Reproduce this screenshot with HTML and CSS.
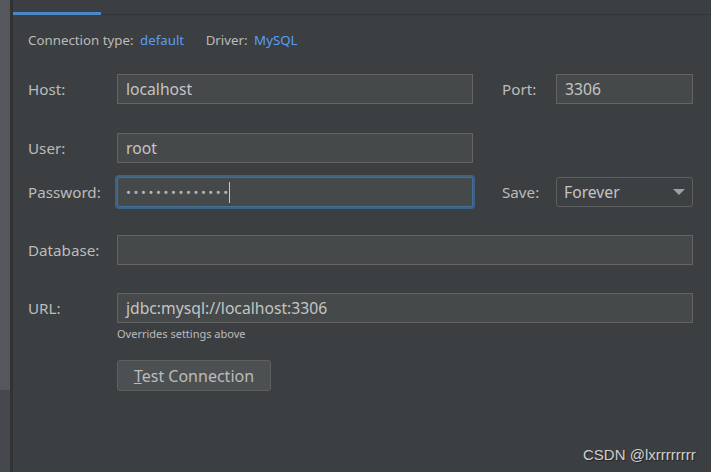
FILE: index.html
```html
<!DOCTYPE html>
<html lang="en">
<head>
  <meta charset="UTF-8">
  <meta name="viewport" content="width=device-width, initial-scale=1.0">
  <title>Data Source</title>
  <link rel="stylesheet" href="styles.css">
</head>
<body>
  <div class="window">
    <div class="side">
      <div class="side-top"></div>
    </div>
    <div class="panel">
      <!-- tabs, cut off at the top -->
      <div class="tabs">
        <div class="tab active"></div>
      </div>

      <div class="info">
        <span class="muted">Connection type:</span>
        <a class="link">default</a>
        <span class="muted driver">Driver:</span>
        <a class="link">MySQL</a>
      </div>

      <div class="form">
        <div class="row row-host">
          <label>Host:</label>
          <div class="field">localhost</div>
          <span></span>
          <label>Port:</label>
          <div class="field">3306</div>
        </div>

        <div class="row row-user">
          <label>User:</label>
          <div class="field">root</div>
        </div>

        <div class="row row-pass">
          <label>Password:</label>
          <div class="field focused"><span class="dots">••••••••••••••</span><span class="caret"></span></div>
          <span></span>
          <label>Save:</label>
          <div class="combo">
            <span>Forever</span>
            <svg width="14" height="8" viewBox="0 0 14 8"><path d="M1 1h12L7 7z" fill="#9da0a4"/></svg>
          </div>
        </div>

        <div class="row row-db">
          <label>Database:</label>
          <div class="field wide"></div>
        </div>

        <div class="row row-url">
          <label>URL:</label>
          <div class="field wide">jdbc:mysql://localhost:3306</div>
        </div>
        <div class="hint">Overrides settings above</div>

        <button class="btn-test"><u>T</u>est Connection</button>
      </div>
    </div>
  </div>
  <div class="watermark">CSDN @lxrrrrrrrr</div>
</body>
</html>
```

FILE: styles.css
```css
/* base */
body {
  margin: 0;
  background: #3c3f41;
  font-family: "Noto Sans", "Open Sans", sans-serif;
  color: #bbbbbb;
  overflow: hidden;
}
.window {
  display: flex;
  height: 472px;
}
/* left strip */
.side {
  width: 10px;
  background: #45484c;
  border-right: 2px solid #313335;
}
.side-top {
  height: 390px;
  background: #54575c;
}
.panel {
  flex: 1;
  border-left: 1px solid #2f3133;
}
/* tabs */
.tabs {
  height: 14px;
  border-bottom: 1px solid #323436;
  display: flex;
  align-items: flex-end;
}
.tab.active {
  width: 88px;
  height: 3px;
  background: #4a88c7;
  margin-bottom: -1px;
}
/* connection info */
.info {
  padding: 15px 0 0 15px;
  font-size: 13.3px;
  line-height: 20px;
  height: 20px;
}
.link {
  color: #589df6;
  margin-left: 3px;
}
.driver {
  margin-left: 18px;
}
/* form */
.form {
  padding-left: 15px;
}
.row {
  display: grid;
  grid-template-columns: 89px 356px 29px 54px 137px;
  align-items: center;
  font-size: 15.2px;
}
.row-host { margin-top: 24px; }
.row-user { margin-top: 29px; }
.row-pass { margin-top: 14px; }
.row-db { margin-top: 28px; }
.row-url { margin-top: 28px; }
.field {
  height: 28px;
  line-height: 28px;
  background: #45494a;
  border: 1px solid #646464;
  padding: 0 8px;
  font-size: 15.7px;
  color: #c4c4c4;
  white-space: nowrap;
}
.field.wide {
  grid-column: 2 / 6;
}
.field.focused {
  border-color: #466d94;
  box-shadow: 0 0 0 2px #3d6185;
  border-radius: 2px;
  display: flex;
  align-items: center;
}
.dots {
  font-size: 13px;
  letter-spacing: 2.6px;
  color: #b4b4b4;
}
.caret {
  width: 1px;
  height: 21px;
  margin-left: -2px;
  background: #c8c8c8;
}
.combo {
  height: 28px;
  border: 1px solid #5e6060;
  border-radius: 3px;
  background: #3d4042;
  display: flex;
  align-items: center;
  justify-content: space-between;
  padding: 0 6px 0 7px;
  font-size: 15.7px;
  color: #c4c4c4;
}
.hint {
  margin: 4px 0 0 89px;
  font-size: 11px;
  line-height: 14px;
}
.btn-test {
  margin: 19px 0 0 89px;
  width: 154px;
  height: 31px;
  background: #4c5052;
  border: 1px solid #5e6060;
  border-radius: 3px;
  color: #bbbbbb;
  font-family: inherit;
  font-size: 16px;
  padding: 0;
}
.watermark {
  position: absolute;
  left: 583px;
  top: 446px;
  font-family: "Liberation Sans", Arial, sans-serif;
  font-size: 15px;
  color: #d0d0d0;
  text-shadow: 1px 1px 1px #222;
}
```
